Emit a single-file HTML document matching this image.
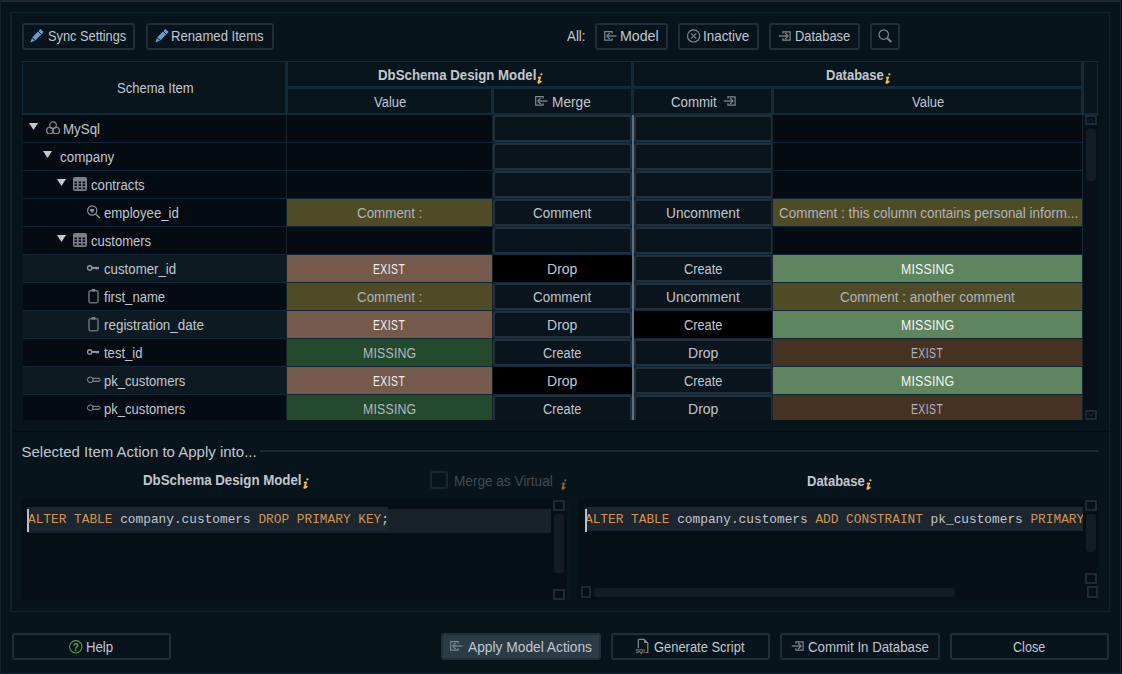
<!DOCTYPE html><html><head><meta charset="utf-8"><style>
html,body{margin:0;padding:0}
body{width:1122px;height:674px;overflow:hidden;background:#08141c;position:relative;font-family:"Liberation Sans",sans-serif;color:#c0c7ce;font-size:13.5px}
.a{position:absolute;box-sizing:border-box}
.t{position:absolute;white-space:pre;line-height:14px}
.b{position:absolute;box-sizing:border-box;border:2px solid #222e39;border-radius:3px}
.mono{font-family:"Liberation Mono",monospace;font-size:12.8px}
</style></head><body>
<div class="a" style="left:0px;top:0px;width:1122px;height:2px;background:#1c2832;"></div>
<div class="a" style="left:0px;top:0px;width:1px;height:674px;background:#16222c;"></div>
<div class="a" style="left:1120px;top:0px;width:1px;height:674px;background:#1a2630;"></div>
<div class="a" style="left:1121px;top:0px;width:1px;height:674px;background:#050a10;"></div>
<div class="a" style="left:0px;top:673px;width:1122px;height:1px;background:#16222c;"></div>
<div class="a" style="left:10px;top:12px;width:1100px;height:600px;border:1px solid #0f2433;border-left-width:2px;"></div>
<div class="b" style="left:22px;top:23px;width:113px;height:27px"></div>
<div class="b" style="left:146px;top:23px;width:128px;height:27px"></div>
<div class="b" style="left:595px;top:23px;width:73px;height:27px"></div>
<div class="b" style="left:678px;top:23px;width:81px;height:27px"></div>
<div class="b" style="left:769px;top:23px;width:91px;height:27px"></div>
<div class="b" style="left:870px;top:23px;width:30px;height:27px"></div>
<svg class="a" style="left:27px;top:26px;" width="20" height="20" viewBox="0 0 20 20"><path d="M3.3 16.6 L5.2 11.47 L13.42 2.97 L16.58 6.03 L8.36 14.53 Z" fill="#5e9fd8"/><path d="M5.0 11.6 L8.5 14.7 M11.0 5.2 L14.5 8.5" stroke="#08141c" stroke-width="1"/></svg>
<span class="t" style="left:47.60px;top:29px;font-size:14px;transform:scaleX(0.9140);transform-origin:0 0;">Sync Settings</span>
<svg class="a" style="left:151.5px;top:25.5px;" width="20" height="20" viewBox="0 0 20 20"><path d="M3.3 16.6 L5.2 11.47 L13.42 2.97 L16.58 6.03 L8.36 14.53 Z" fill="#5e9fd8"/><path d="M5.0 11.6 L8.5 14.7 M11.0 5.2 L14.5 8.5" stroke="#08141c" stroke-width="1"/></svg>
<span class="t" style="left:171.36px;top:29px;font-size:14px;transform:scaleX(0.9378);transform-origin:0 0;">Renamed Items</span>
<span class="t" style="left:566.50px;top:29px;font-size:14px;transform:scaleX(0.9526);transform-origin:0 0;">All:</span>
<svg class="a" style="left:603px;top:30px;" width="14" height="12" viewBox="0 0 14 12"><path d="M9.1 3.5 V1.6 H1.7 V10.2 H9.1 V8.3" fill="none" stroke="#7f888e" stroke-width="1.2"/><path d="M5 6 H13.5" stroke="#7f888e" stroke-width="1.3"/><path d="M6.6 3 L3.8 6 L6.6 9" fill="none" stroke="#7f888e" stroke-width="1.2"/></svg>
<span class="t" style="left:620.49px;top:29px;font-size:14px;transform:scaleX(1.0135);transform-origin:0 0;">Model</span>
<svg class="a" style="left:686px;top:28px;" width="16" height="16" viewBox="0 0 16 16"><circle cx="7.6" cy="7.9" r="6.1" fill="none" stroke="#7f888e" stroke-width="1.2"/><path d="M5 5.3 L10.3 10.6 M10.3 5.3 L5 10.6" stroke="#7f888e" stroke-width="1.1"/></svg>
<span class="t" style="left:703.44px;top:29px;font-size:14px;transform:scaleX(0.9574);transform-origin:0 0;">Inactive</span>
<svg class="a" style="left:777px;top:30px;" width="14" height="12" viewBox="0 0 14 12"><path d="M5.9 3.5 V1.8 H13.1 V10.1 H5.9 V8.3" fill="none" stroke="#7f888e" stroke-width="1.2"/><path d="M1.8 6 H10.5" stroke="#7f888e" stroke-width="1.3"/><path d="M8.2 3 L11 6 L8.2 9" fill="none" stroke="#7f888e" stroke-width="1.2"/></svg>
<span class="t" style="left:794.88px;top:29px;font-size:14px;transform:scaleX(0.9220);transform-origin:0 0;">Database</span>
<svg class="a" style="left:875px;top:26px;" width="20" height="20" viewBox="0 0 20 20"><circle cx="8.75" cy="8.6" r="4.7" fill="none" stroke="#7f888e" stroke-width="1.2"/><path d="M12.2 12.1 L16.3 16" stroke="#7f888e" stroke-width="2"/></svg>
<div class="a" style="left:22px;top:61px;width:1076px;height:53px;background:#09151d;"></div>
<div class="a" style="left:22px;top:61px;width:1076px;height:1px;background:#132a38;"></div>
<div class="a" style="left:22px;top:61px;width:1px;height:54px;background:#132a38;"></div>
<div class="a" style="left:22px;top:115px;width:1px;height:305px;background:#0b1620;"></div>
<div class="a" style="left:285px;top:61px;width:3px;height:53px;background:#132a38;"></div>
<div class="a" style="left:286px;top:86px;width:797px;height:3px;background:#132a38;"></div>
<div class="a" style="left:22px;top:113px;width:1076px;height:2px;background:#132a38;"></div>
<div class="a" style="left:491px;top:88px;width:3px;height:26px;background:#132a38;"></div>
<div class="a" style="left:631px;top:61px;width:3px;height:53px;background:#132a38;"></div>
<div class="a" style="left:771px;top:88px;width:3px;height:26px;background:#132a38;"></div>
<div class="a" style="left:1081px;top:61px;width:3px;height:53px;background:#132a38;"></div>
<div class="a" style="left:1097px;top:61px;width:1px;height:54px;background:#132a38;"></div>
<span class="t" style="left:116.80px;top:81px;font-size:14px;transform:scaleX(0.9293);transform-origin:0 0;">Schema Item</span>
<span class="t" style="left:377.50px;top:68px;font-size:14px;font-weight:700;transform:scaleX(0.9467);transform-origin:0 0;">DbSchema Design Model</span>
<span class="t" style="left:825.60px;top:68px;font-size:14px;font-weight:700;transform:scaleX(0.9274);transform-origin:0 0;">Database</span>
<span class="t" style="left:374.30px;top:95px;font-size:14px;transform:scaleX(0.9257);transform-origin:0 0;">Value</span>
<span class="t" style="left:911.90px;top:95px;font-size:14px;transform:scaleX(0.9257);transform-origin:0 0;">Value</span>
<span class="t" style="left:551.52px;top:95px;font-size:14px;transform:scaleX(0.9769);transform-origin:0 0;">Merge</span>
<span class="t" style="left:671.40px;top:95px;font-size:14px;transform:scaleX(0.9490);transform-origin:0 0;">Commit</span>
<svg class="a" style="left:536px;top:73px;" width="8" height="11" viewBox="0 0 8 11"><circle cx="5.4" cy="1.3" r="1.15" fill="#f0bf4c"/><path d="M2.6 4.7 L4.3 4.3 L2.3 9.4 Q2.1 10.3 3.1 9.8 L4.8 8.5" fill="none" stroke="#f0bf4c" stroke-width="1.7" stroke-linecap="round" stroke-linejoin="round"/></svg>
<svg class="a" style="left:883.5px;top:72.5px;" width="8" height="11" viewBox="0 0 8 11"><circle cx="5.4" cy="1.3" r="1.15" fill="#f0bf4c"/><path d="M2.6 4.7 L4.3 4.3 L2.3 9.4 Q2.1 10.3 3.1 9.8 L4.8 8.5" fill="none" stroke="#f0bf4c" stroke-width="1.7" stroke-linecap="round" stroke-linejoin="round"/></svg>
<svg class="a" style="left:534px;top:95px;" width="14" height="12" viewBox="0 0 14 12"><path d="M9.1 3.5 V1.6 H1.7 V10.2 H9.1 V8.3" fill="none" stroke="#7f888e" stroke-width="1.2"/><path d="M5 6 H13.5" stroke="#7f888e" stroke-width="1.3"/><path d="M6.6 3 L3.8 6 L6.6 9" fill="none" stroke="#7f888e" stroke-width="1.2"/></svg>
<svg class="a" style="left:722px;top:95px;" width="14" height="12" viewBox="0 0 14 12"><path d="M5.9 3.5 V1.8 H13.1 V10.1 H5.9 V8.3" fill="none" stroke="#7f888e" stroke-width="1.2"/><path d="M1.8 6 H10.5" stroke="#7f888e" stroke-width="1.3"/><path d="M8.2 3 L11 6 L8.2 9" fill="none" stroke="#7f888e" stroke-width="1.2"/></svg>
<div class="a" style="left:23px;top:115px;width:1060px;height:305px;background:#050b12;"></div>
<div class="a" style="left:1083px;top:115px;width:15px;height:305px;background:#07101a;"></div>
<div class="a" style="left:1082px;top:115px;width:1px;height:305px;background:#1a2631;"></div>
<div class="a" style="left:1085px;top:115px;width:12px;height:10px;border:2px solid #1e2a35;"></div>
<svg class="a" style="left:1087px;top:117px;" width="8" height="6" viewBox="0 0 8 6"><path d="M1 5 L4 1.5 L7 5" fill="none" stroke="#1e2a35" stroke-width="1"/></svg>
<div class="a" style="left:1086px;top:129px;width:10px;height:52px;background:#111c25;border-radius:3px;"></div>
<div class="a" style="left:1085px;top:410px;width:12px;height:10px;border:2px solid #1e2a35;"></div>
<svg class="a" style="left:1087px;top:412px;" width="8" height="6" viewBox="0 0 8 6"><path d="M1 1 L4 4.5 L7 1" fill="none" stroke="#1e2a35" stroke-width="1"/></svg>
<div class="a" style="left:23px;top:142px;width:1060px;height:1px;background:#0f2636;"></div>
<svg class="a" style="left:29.3px;top:123px;" width="9" height="7" viewBox="0 0 9 7"><path d="M0 0 H9 L4.5 7 Z" fill="#c3c8cc"/></svg>
<svg class="a" style="left:46px;top:121px;" width="14" height="13" viewBox="0 0 14 13"><g fill="none" stroke="#7f878c" stroke-width="1.3"><circle cx="7" cy="4.2" r="3.3"/><circle cx="3.9" cy="9.6" r="3.3"/><circle cx="10.2" cy="9.6" r="3.3"/></g><circle cx="7" cy="9.6" r="1.2" fill="#7f878c"/></svg>
<span class="t" style="left:62.75px;top:122px;font-size:14px;transform:scaleX(0.9526);transform-origin:0 0;">MySql</span>
<div class="a" style="left:493px;top:115px;width:139px;height:27px;background:#09141c;border:2px solid #242f3a;border-radius:2px;"></div>
<div class="a" style="left:634px;top:115px;width:139px;height:27px;background:#09141c;border:2px solid #242f3a;border-radius:2px;"></div>
<div class="a" style="left:23px;top:170px;width:1060px;height:1px;background:#0f2636;"></div>
<svg class="a" style="left:43px;top:151px;" width="9" height="7" viewBox="0 0 9 7"><path d="M0 0 H9 L4.5 7 Z" fill="#c3c8cc"/></svg>
<span class="t" style="left:60.20px;top:150px;font-size:14px;transform:scaleX(0.9561);transform-origin:0 0;">company</span>
<div class="a" style="left:493px;top:143px;width:139px;height:27px;background:#09141c;border:2px solid #242f3a;border-radius:2px;"></div>
<div class="a" style="left:634px;top:143px;width:139px;height:27px;background:#09141c;border:2px solid #242f3a;border-radius:2px;"></div>
<div class="a" style="left:23px;top:198px;width:1060px;height:1px;background:#0f2636;"></div>
<svg class="a" style="left:56.7px;top:179px;" width="9" height="7" viewBox="0 0 9 7"><path d="M0 0 H9 L4.5 7 Z" fill="#c3c8cc"/></svg>
<svg class="a" style="left:73px;top:177px;" width="14" height="14" viewBox="0 0 14 14"><rect x="0" y="0" width="14" height="14" rx="2" fill="#788186"/><rect x="1.5" y="4.5" width="2.5" height="1.8" fill="#050b12"/><rect x="1.5" y="7.3" width="2.5" height="1.7" fill="#050b12"/><rect x="1.5" y="10.4" width="2.5" height="1.9" fill="#050b12"/><rect x="5.6" y="4.5" width="2.5" height="1.8" fill="#050b12"/><rect x="5.6" y="7.3" width="2.5" height="1.7" fill="#050b12"/><rect x="5.6" y="10.4" width="2.5" height="1.9" fill="#050b12"/><rect x="9.6" y="4.5" width="2.5" height="1.8" fill="#050b12"/><rect x="9.6" y="7.3" width="2.5" height="1.7" fill="#050b12"/><rect x="9.6" y="10.4" width="2.5" height="1.9" fill="#050b12"/></svg>
<span class="t" style="left:90.80px;top:178px;font-size:14px;transform:scaleX(0.9456);transform-origin:0 0;">contracts</span>
<div class="a" style="left:493px;top:171px;width:139px;height:27px;background:#09141c;border:2px solid #242f3a;border-radius:2px;"></div>
<div class="a" style="left:634px;top:171px;width:139px;height:27px;background:#09141c;border:2px solid #242f3a;border-radius:2px;"></div>
<div class="a" style="left:23px;top:226px;width:1060px;height:1px;background:#0f2636;"></div>
<svg class="a" style="left:87px;top:205px;" width="14" height="14" viewBox="0 0 14 14"><circle cx="5.2" cy="5.5" r="4.6" fill="none" stroke="#8a9398" stroke-width="1.2"/><path d="M5.1 8 L3 5.6 Q2.6 4 4.1 3.7 Q4.8 3.7 5.1 4.3 Q5.5 3.7 6.2 3.7 Q7.6 4 7.2 5.6 Z" fill="#8a9398"/><path d="M8.5 9 L12.8 13" stroke="#8a9398" stroke-width="1.4"/></svg>
<span class="t" style="left:104.10px;top:206px;font-size:14px;transform:scaleX(0.9430);transform-origin:0 0;">employee_id</span>
<div class="a" style="left:287px;top:199px;width:205px;height:27px;background:#4f4b27;"></div>
<span class="t" style="left:357.00px;top:206px;font-size:14px;color:#b0b4bc;transform:scaleX(0.9559);transform-origin:0 0;">Comment :</span>
<div class="a" style="left:493px;top:199px;width:139px;height:27px;background:#09141c;border:2px solid #242f3a;border-radius:2px;"></div>
<span class="t" style="left:533.25px;top:206px;font-size:14px;color:#c0c7ce;transform:scaleX(0.9590);transform-origin:0 0;">Comment</span>
<div class="a" style="left:634px;top:199px;width:139px;height:27px;background:#09141c;border:2px solid #242f3a;border-radius:2px;"></div>
<span class="t" style="left:665.87px;top:206px;font-size:14px;color:#c0c7ce;transform:scaleX(0.9773);transform-origin:0 0;">Uncomment</span>
<div class="a" style="left:773px;top:199px;width:309px;height:27px;background:#4f4b27;"></div>
<span class="t" style="left:778.60px;top:206px;font-size:14px;color:#b0b4bc;transform:scaleX(0.9613);transform-origin:0 0;">Comment : this column contains personal inform...</span>
<div class="a" style="left:23px;top:254px;width:1060px;height:1px;background:#0f2636;"></div>
<svg class="a" style="left:56.7px;top:235px;" width="9" height="7" viewBox="0 0 9 7"><path d="M0 0 H9 L4.5 7 Z" fill="#c3c8cc"/></svg>
<svg class="a" style="left:73px;top:233px;" width="14" height="14" viewBox="0 0 14 14"><rect x="0" y="0" width="14" height="14" rx="2" fill="#788186"/><rect x="1.5" y="4.5" width="2.5" height="1.8" fill="#050b12"/><rect x="1.5" y="7.3" width="2.5" height="1.7" fill="#050b12"/><rect x="1.5" y="10.4" width="2.5" height="1.9" fill="#050b12"/><rect x="5.6" y="4.5" width="2.5" height="1.8" fill="#050b12"/><rect x="5.6" y="7.3" width="2.5" height="1.7" fill="#050b12"/><rect x="5.6" y="10.4" width="2.5" height="1.9" fill="#050b12"/><rect x="9.6" y="4.5" width="2.5" height="1.8" fill="#050b12"/><rect x="9.6" y="7.3" width="2.5" height="1.7" fill="#050b12"/><rect x="9.6" y="10.4" width="2.5" height="1.9" fill="#050b12"/></svg>
<span class="t" style="left:90.80px;top:234px;font-size:14px;transform:scaleX(0.9308);transform-origin:0 0;">customers</span>
<div class="a" style="left:493px;top:227px;width:139px;height:27px;background:#09141c;border:2px solid #242f3a;border-radius:2px;"></div>
<div class="a" style="left:634px;top:227px;width:139px;height:27px;background:#09141c;border:2px solid #242f3a;border-radius:2px;"></div>
<div class="a" style="left:23px;top:255px;width:263px;height:27px;background:#0e1a22;"></div>
<div class="a" style="left:23px;top:282px;width:1060px;height:1px;background:#0f2636;"></div>
<svg class="a" style="left:87px;top:265px;" width="13" height="6" viewBox="0 0 13 6"><circle cx="2.7" cy="2.9" r="2.2" fill="none" stroke="#8f989e" stroke-width="1.4"/><path d="M5 2.9 H12" stroke="#8f989e" stroke-width="2"/><path d="M9.3 3.5 V4.6 M11 3.5 V4.6" stroke="#8f989e" stroke-width="1"/></svg>
<span class="t" style="left:104.10px;top:262px;font-size:14px;transform:scaleX(0.9461);transform-origin:0 0;">customer_id</span>
<div class="a" style="left:287px;top:255px;width:205px;height:27px;background:#75594a;"></div>
<span class="t" style="left:373.06px;top:262px;font-size:14px;color:#f2f2f2;letter-spacing:0.608px;transform:scaleX(0.7400);transform-origin:0 0;">EXIST</span>
<div class="a" style="left:493px;top:255px;width:139px;height:27px;background:#000000;"></div>
<span class="t" style="left:547.05px;top:262px;font-size:14px;color:#c0c7ce;">Drop</span>
<div class="a" style="left:634px;top:255px;width:139px;height:27px;background:#09141c;border:2px solid #242f3a;border-radius:2px;"></div>
<span class="t" style="left:684.35px;top:262px;font-size:14px;color:#c0c7ce;transform:scaleX(0.9119);transform-origin:0 0;">Create</span>
<div class="a" style="left:773px;top:255px;width:309px;height:27px;background:#5e855e;"></div>
<span class="t" style="left:900.52px;top:262px;font-size:14px;color:#f4f4f4;letter-spacing:0.220px;transform:scaleX(0.8800);transform-origin:0 0;">MISSING</span>
<div class="a" style="left:23px;top:310px;width:1060px;height:1px;background:#0f2636;"></div>
<svg class="a" style="left:88px;top:289px;" width="11" height="15" viewBox="0 0 11 15"><rect x="1" y="1.8" width="9" height="12" rx="1.5" fill="none" stroke="#646c72" stroke-width="1.6"/><rect x="3.5" y="0" width="4" height="2.6" rx="0.8" fill="#7a8288"/></svg>
<span class="t" style="left:104.10px;top:290px;font-size:14px;transform:scaleX(0.9354);transform-origin:0 0;">first_name</span>
<div class="a" style="left:287px;top:283px;width:205px;height:27px;background:#4f4b27;"></div>
<span class="t" style="left:357.00px;top:290px;font-size:14px;color:#b0b4bc;transform:scaleX(0.9559);transform-origin:0 0;">Comment :</span>
<div class="a" style="left:493px;top:283px;width:139px;height:27px;background:#09141c;border:2px solid #242f3a;border-radius:2px;"></div>
<span class="t" style="left:533.25px;top:290px;font-size:14px;color:#c0c7ce;transform:scaleX(0.9590);transform-origin:0 0;">Comment</span>
<div class="a" style="left:634px;top:283px;width:139px;height:27px;background:#09141c;border:2px solid #242f3a;border-radius:2px;"></div>
<span class="t" style="left:665.87px;top:290px;font-size:14px;color:#c0c7ce;transform:scaleX(0.9773);transform-origin:0 0;">Uncomment</span>
<div class="a" style="left:773px;top:283px;width:309px;height:27px;background:#4f4b27;"></div>
<span class="t" style="left:839.80px;top:290px;font-size:14px;color:#b0b4bc;transform:scaleX(0.9637);transform-origin:0 0;">Comment : another comment</span>
<div class="a" style="left:23px;top:311px;width:263px;height:27px;background:#0e1a22;"></div>
<div class="a" style="left:23px;top:338px;width:1060px;height:1px;background:#0f2636;"></div>
<svg class="a" style="left:88px;top:317px;" width="11" height="15" viewBox="0 0 11 15"><rect x="1" y="1.8" width="9" height="12" rx="1.5" fill="none" stroke="#646c72" stroke-width="1.6"/><rect x="3.5" y="0" width="4" height="2.6" rx="0.8" fill="#7a8288"/></svg>
<span class="t" style="left:104.10px;top:318px;font-size:14px;transform:scaleX(0.9577);transform-origin:0 0;">registration_date</span>
<div class="a" style="left:287px;top:311px;width:205px;height:27px;background:#75594a;"></div>
<span class="t" style="left:373.06px;top:318px;font-size:14px;color:#f2f2f2;letter-spacing:0.608px;transform:scaleX(0.7400);transform-origin:0 0;">EXIST</span>
<div class="a" style="left:493px;top:311px;width:139px;height:27px;background:#09141c;border:2px solid #242f3a;border-radius:2px;"></div>
<span class="t" style="left:547.05px;top:318px;font-size:14px;color:#c0c7ce;">Drop</span>
<div class="a" style="left:634px;top:311px;width:139px;height:27px;background:#000000;"></div>
<span class="t" style="left:684.35px;top:318px;font-size:14px;color:#c0c7ce;transform:scaleX(0.9119);transform-origin:0 0;">Create</span>
<div class="a" style="left:773px;top:311px;width:309px;height:27px;background:#5e855e;"></div>
<span class="t" style="left:900.52px;top:318px;font-size:14px;color:#f4f4f4;letter-spacing:0.220px;transform:scaleX(0.8800);transform-origin:0 0;">MISSING</span>
<div class="a" style="left:23px;top:366px;width:1060px;height:1px;background:#0f2636;"></div>
<svg class="a" style="left:87px;top:349px;" width="13" height="6" viewBox="0 0 13 6"><circle cx="2.7" cy="2.9" r="2.2" fill="none" stroke="#8f989e" stroke-width="1.4"/><path d="M5 2.9 H12" stroke="#8f989e" stroke-width="2"/><path d="M9.3 3.5 V4.6 M11 3.5 V4.6" stroke="#8f989e" stroke-width="1"/></svg>
<span class="t" style="left:104.10px;top:346px;font-size:14px;transform:scaleX(0.9317);transform-origin:0 0;">test_id</span>
<div class="a" style="left:287px;top:339px;width:205px;height:27px;background:#234a2d;"></div>
<span class="t" style="left:362.52px;top:346px;font-size:14px;color:#b0b8c2;letter-spacing:0.220px;transform:scaleX(0.8800);transform-origin:0 0;">MISSING</span>
<div class="a" style="left:493px;top:339px;width:139px;height:27px;background:#09141c;border:2px solid #242f3a;border-radius:2px;"></div>
<span class="t" style="left:543.35px;top:346px;font-size:14px;color:#c0c7ce;transform:scaleX(0.9119);transform-origin:0 0;">Create</span>
<div class="a" style="left:634px;top:339px;width:139px;height:27px;background:#09141c;border:2px solid #242f3a;border-radius:2px;"></div>
<span class="t" style="left:688.05px;top:346px;font-size:14px;color:#c0c7ce;">Drop</span>
<div class="a" style="left:773px;top:339px;width:309px;height:27px;background:#463324;"></div>
<span class="t" style="left:911.06px;top:346px;font-size:14px;color:#b0b4c0;letter-spacing:0.608px;transform:scaleX(0.7400);transform-origin:0 0;">EXIST</span>
<div class="a" style="left:23px;top:367px;width:263px;height:27px;background:#0e1a22;"></div>
<div class="a" style="left:23px;top:394px;width:1060px;height:1px;background:#0f2636;"></div>
<svg class="a" style="left:87px;top:376px;" width="14" height="8" viewBox="0 0 14 8"><circle cx="3.3" cy="3.8" r="2.8" fill="none" stroke="#8f989e" stroke-width="1"/><path d="M6 2.3 H12.3 L13.3 3.8 L12.3 5.3 H6" fill="none" stroke="#8f989e" stroke-width="1"/><path d="M9 4.5 V5.5 M11 4.5 V5.5" stroke="#8f989e" stroke-width="0.8"/></svg>
<span class="t" style="left:104.10px;top:374px;font-size:14px;transform:scaleX(0.9333);transform-origin:0 0;">pk_customers</span>
<div class="a" style="left:287px;top:367px;width:205px;height:27px;background:#75594a;"></div>
<span class="t" style="left:373.06px;top:374px;font-size:14px;color:#f2f2f2;letter-spacing:0.608px;transform:scaleX(0.7400);transform-origin:0 0;">EXIST</span>
<div class="a" style="left:493px;top:367px;width:139px;height:27px;background:#000000;"></div>
<span class="t" style="left:547.05px;top:374px;font-size:14px;color:#c0c7ce;">Drop</span>
<div class="a" style="left:634px;top:367px;width:139px;height:27px;background:#09141c;border:2px solid #242f3a;border-radius:2px;"></div>
<span class="t" style="left:684.35px;top:374px;font-size:14px;color:#c0c7ce;transform:scaleX(0.9119);transform-origin:0 0;">Create</span>
<div class="a" style="left:773px;top:367px;width:309px;height:27px;background:#5e855e;"></div>
<span class="t" style="left:900.52px;top:374px;font-size:14px;color:#f4f4f4;letter-spacing:0.220px;transform:scaleX(0.8800);transform-origin:0 0;">MISSING</span>
<div class="a" style="left:23px;top:422px;width:1060px;height:1px;background:#0f2636;"></div>
<svg class="a" style="left:87px;top:404px;" width="14" height="8" viewBox="0 0 14 8"><circle cx="3.3" cy="3.8" r="2.8" fill="none" stroke="#8f989e" stroke-width="1"/><path d="M6 2.3 H12.3 L13.3 3.8 L12.3 5.3 H6" fill="none" stroke="#8f989e" stroke-width="1"/><path d="M9 4.5 V5.5 M11 4.5 V5.5" stroke="#8f989e" stroke-width="0.8"/></svg>
<span class="t" style="left:104.10px;top:402px;font-size:14px;transform:scaleX(0.9333);transform-origin:0 0;">pk_customers</span>
<div class="a" style="left:287px;top:395px;width:205px;height:27px;background:#234a2d;"></div>
<span class="t" style="left:362.52px;top:402px;font-size:14px;color:#b0b8c2;letter-spacing:0.220px;transform:scaleX(0.8800);transform-origin:0 0;">MISSING</span>
<div class="a" style="left:493px;top:395px;width:139px;height:27px;background:#09141c;border:2px solid #242f3a;border-radius:2px;"></div>
<span class="t" style="left:543.35px;top:402px;font-size:14px;color:#c0c7ce;transform:scaleX(0.9119);transform-origin:0 0;">Create</span>
<div class="a" style="left:634px;top:395px;width:139px;height:27px;background:#09141c;border:2px solid #242f3a;border-radius:2px;"></div>
<span class="t" style="left:688.05px;top:402px;font-size:14px;color:#c0c7ce;">Drop</span>
<div class="a" style="left:773px;top:395px;width:309px;height:27px;background:#463324;"></div>
<span class="t" style="left:911.06px;top:402px;font-size:14px;color:#b0b4c0;letter-spacing:0.608px;transform:scaleX(0.7400);transform-origin:0 0;">EXIST</span>
<div class="a" style="left:286px;top:115px;width:1px;height:305px;background:#13222d;"></div>
<div class="a" style="left:492px;top:115px;width:1px;height:305px;background:#13222d;"></div>
<div class="a" style="left:632px;top:115px;width:2px;height:305px;background:#587183;"></div>
<div class="a" style="left:772px;top:115px;width:1px;height:305px;background:#13222d;"></div>
<div class="a" style="left:23px;top:420px;width:1060px;height:11px;background:#08141c;"></div>
<div class="a" style="left:1083px;top:420px;width:15px;height:11px;background:#08141c;"></div>
<div class="a" style="left:12px;top:431px;width:1097px;height:1px;background:#050d14;"></div>
<span class="t" style="left:21.50px;top:445px;font-size:15px;">Selected Item Action to Apply into...</span>
<div class="a" style="left:260px;top:450px;width:839px;height:2px;background:#1f2a35;"></div>
<span class="t" style="left:142.70px;top:473px;font-size:14px;font-weight:700;transform:scaleX(0.9479);transform-origin:0 0;">DbSchema Design Model</span>
<svg class="a" style="left:301.5px;top:478px;" width="8" height="11" viewBox="0 0 8 11"><circle cx="5.4" cy="1.3" r="1.15" fill="#f0bf4c"/><path d="M2.6 4.7 L4.3 4.3 L2.3 9.4 Q2.1 10.3 3.1 9.8 L4.8 8.5" fill="none" stroke="#f0bf4c" stroke-width="1.7" stroke-linecap="round" stroke-linejoin="round"/></svg>
<div class="a" style="left:430px;top:471px;width:18px;height:18px;border:2px solid #1a2631;border-radius:2px;"></div>
<span class="t" style="left:453.53px;top:474px;font-size:14px;color:#424a52;transform:scaleX(0.9710);transform-origin:0 0;">Merge as Virtual</span>
<svg class="a" style="left:559.5px;top:478.5px;" width="8" height="11" viewBox="0 0 8 11"><circle cx="5.4" cy="1.3" r="1.15" fill="#7d6636"/><path d="M2.6 4.7 L4.3 4.3 L2.3 9.4 Q2.1 10.3 3.1 9.8 L4.8 8.5" fill="none" stroke="#7d6636" stroke-width="1.7" stroke-linecap="round" stroke-linejoin="round"/></svg>
<span class="t" style="left:806.50px;top:474px;font-size:14px;font-weight:700;transform:scaleX(0.9274);transform-origin:0 0;">Database</span>
<svg class="a" style="left:865px;top:478.5px;" width="8" height="11" viewBox="0 0 8 11"><circle cx="5.4" cy="1.3" r="1.15" fill="#f0bf4c"/><path d="M2.6 4.7 L4.3 4.3 L2.3 9.4 Q2.1 10.3 3.1 9.8 L4.8 8.5" fill="none" stroke="#f0bf4c" stroke-width="1.7" stroke-linecap="round" stroke-linejoin="round"/></svg>
<div class="a" style="left:21px;top:499px;width:547px;height:101px;background:#070f16;"></div>
<div class="a" style="left:579px;top:499px;width:519px;height:101px;background:#070f16;"></div>
<div class="a" style="left:27px;top:509px;width:524px;height:24px;background:#19222b;"></div>
<div class="a" style="left:27px;top:507px;width:361px;height:24px;background:#1c2630;"></div>
<div class="a" style="left:27px;top:509px;width:2px;height:23px;background:#b8c0c8;"></div>
<span class="t mono" style="left:28px;top:513px"><span style="color:#d39450">ALTER TABLE</span> company.customers <span style="color:#d39450">DROP PRIMARY KEY</span>;</span>
<div class="a" style="left:553px;top:500px;width:12px;height:11px;border:2px solid #1e2a35;"></div>
<div class="a" style="left:554px;top:514px;width:10px;height:59px;background:#111c25;border-radius:3px;"></div>
<div class="a" style="left:553px;top:589px;width:12px;height:11px;border:2px solid #1e2a35;"></div>
<div class="a" style="left:567px;top:499px;width:2px;height:101px;background:#0b1720;"></div>
<div class="a" style="left:585px;top:507px;width:498px;height:24px;background:#1c2630;"></div>
<div class="a" style="left:585px;top:509px;width:2px;height:23px;background:#b8c0c8;"></div>
<div class="a" style="left:585px;top:505px;width:498px;height:28px;overflow:hidden"><span class="t mono" style="left:0px;top:8px"><span style="color:#d39450">ALTER TABLE</span> company.customers <span style="color:#d39450">ADD CONSTRAINT</span> pk_customers <span style="color:#d39450">PRIMARY KEY</span> (customer_id);</span></div>
<div class="a" style="left:585px;top:509px;width:2px;height:23px;background:#b8c0c8;"></div>
<div class="a" style="left:1085px;top:500px;width:12px;height:11px;border:2px solid #1e2a35;"></div>
<div class="a" style="left:1086px;top:514px;width:10px;height:38px;background:#111c25;border-radius:3px;"></div>
<div class="a" style="left:1085px;top:573px;width:12px;height:11px;border:2px solid #1e2a35;"></div>
<div class="a" style="left:1087px;top:586px;width:11px;height:12px;border:2px solid #1e2a35;"></div>
<div class="a" style="left:581px;top:586px;width:10px;height:12px;border:2px solid #1e2a35;"></div>
<div class="a" style="left:594px;top:588px;width:361px;height:9px;background:#111c25;border-radius:3px;"></div>
<div class="b" style="left:12px;top:633px;width:159px;height:27px;"></div>
<div class="b" style="left:441px;top:633px;width:160px;height:27px;background:#2b3c46;border-color:#222f3a;"></div>
<div class="b" style="left:611px;top:633px;width:159px;height:27px;"></div>
<div class="b" style="left:780px;top:633px;width:160px;height:27px;"></div>
<div class="b" style="left:950px;top:633px;width:159px;height:27px;"></div>
<svg class="a" style="left:69px;top:640px;" width="14" height="14" viewBox="0 0 14 14"><circle cx="6.8" cy="6.8" r="6.2" fill="none" stroke="#5aa046" stroke-width="1.1"/><text x="6.8" y="10.6" text-anchor="middle" font-family="Liberation Sans" font-weight="700" font-size="10" fill="#5aa046">?</text></svg>
<span class="t" style="left:85.86px;top:640px;font-size:14px;transform:scaleX(0.9429);transform-origin:0 0;">Help</span>
<svg class="a" style="left:449px;top:640px;" width="14" height="12" viewBox="0 0 14 12"><path d="M9.1 3.5 V1.6 H1.7 V10.2 H9.1 V8.3" fill="none" stroke="#7f888e" stroke-width="1.2"/><path d="M5 6 H13.5" stroke="#7f888e" stroke-width="1.3"/><path d="M6.6 3 L3.8 6 L6.6 9" fill="none" stroke="#7f888e" stroke-width="1.2"/></svg>
<span class="t" style="left:467.50px;top:640px;font-size:14px;transform:scaleX(0.9833);transform-origin:0 0;">Apply Model Actions</span>
<svg class="a" style="left:634px;top:638px;" width="16" height="16" viewBox="0 0 16 16"><path d="M4.3 10.3 V2.4 Q4.3 1.3 5.4 1.3 H10 L13.8 5 V14.4 H12.3" fill="none" stroke="#7f888e" stroke-width="1.2"/><path d="M10 1.3 L13.8 5 H10 Z" fill="#7f888e"/><text x="7" y="15" text-anchor="middle" font-family="Liberation Sans" font-weight="700" font-size="5.2" fill="#7f888e">SQL</text></svg>
<span class="t" style="left:653.60px;top:640px;font-size:14px;transform:scaleX(0.9232);transform-origin:0 0;">Generate Script</span>
<svg class="a" style="left:790px;top:640px;" width="14" height="12" viewBox="0 0 14 12"><path d="M5.9 3.5 V1.8 H13.1 V10.1 H5.9 V8.3" fill="none" stroke="#7f888e" stroke-width="1.2"/><path d="M1.8 6 H10.5" stroke="#7f888e" stroke-width="1.3"/><path d="M8.2 3 L11 6 L8.2 9" fill="none" stroke="#7f888e" stroke-width="1.2"/></svg>
<span class="t" style="left:808.30px;top:640px;font-size:14px;transform:scaleX(0.9480);transform-origin:0 0;">Commit In Database</span>
<span class="t" style="left:1013.10px;top:640px;font-size:14px;transform:scaleX(0.9000);transform-origin:0 0;">Close</span>
</body></html>
